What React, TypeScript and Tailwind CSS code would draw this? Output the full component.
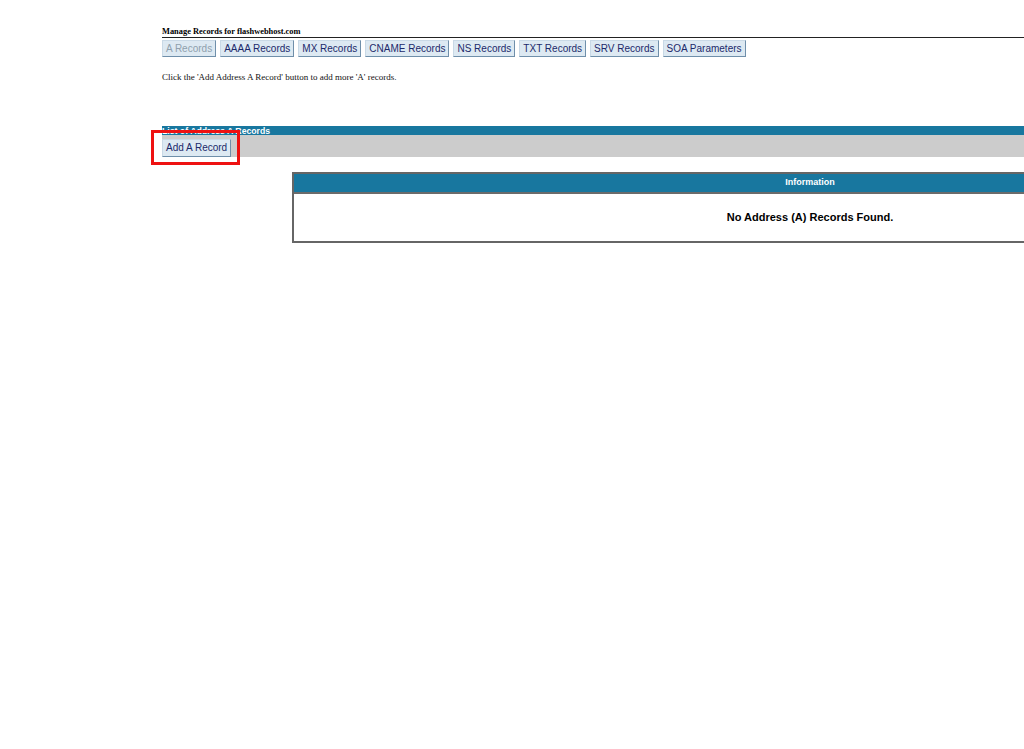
import React from "react";

const tabs = ["A Records", "AAAA Records", "MX Records", "CNAME Records", "NS Records", "TXT Records", "SRV Records", "SOA Parameters"];

export default function App() {
  return (
    <div className="w-full h-[749px] overflow-hidden bg-white relative" style={{ fontFamily: '"Liberation Sans", Arial, sans-serif' }}>
      <div className="pl-[162px] pt-[28px]">
        <div
          className="text-[8.4px] leading-[8px] font-bold text-black border-b border-[#222] pb-[1px]"
          style={{ fontFamily: '"Liberation Serif", "Times New Roman", serif' }}
        >
          Manage Records for flashwebhost.com
        </div>
        <div className="flex gap-[4px] mt-[2px]">
          {tabs.map((t, i) => (
            <div
              key={t}
              className={
                "h-[17px] px-[3px] flex items-center text-[10px] leading-none bg-[#dde9f2] border border-t-[#c9d9e6] border-l-[#c9d9e6] border-r-[#6f8faa] border-b-[#6f8faa] " +
                (i === 0 ? "text-[#8fa0ad]" : "text-[#1c2a6b]")
              }
            >
              {t}
            </div>
          ))}
        </div>
        <div
          className="text-[9px] leading-[10px] text-[#111] mt-[15px]"
          style={{ fontFamily: '"Liberation Serif", "Times New Roman", serif' }}
        >
          Click the 'Add Address A Record' button to add more 'A' records.
        </div>
        <div className="mt-[44px] h-[9px] bg-[#18779f] text-white text-[8.7px] leading-[10px] font-bold whitespace-nowrap overflow-hidden">
          List of Address A Records
        </div>
        <div className="h-[22px] bg-[#cccccc] pt-[4px] flex items-start">
          <div className="flex h-[18px] px-[3px] items-center text-[10px] leading-none text-[#1c2a6b] bg-[#dde9f2] border border-t-[#c9d9e6] border-l-[#c9d9e6] border-r-[#6f8faa] border-b-[#6f8faa]">
            Add A Record
          </div>
        </div>
        <div className="ml-[130px] mt-[15px] w-[1036px] border-2 border-[#666] bg-white">
          <div className="h-[20px] bg-[#18779f] text-white text-[9px] font-bold flex items-center justify-center border-b-2 border-[#6b6b6b]">
            Information
          </div>
          <div className="h-[47px] flex items-center justify-center text-[11px] font-bold text-black">
            No Address (A) Records Found.
          </div>
        </div>
      </div>
      <div className="absolute left-[151px] top-[130px] w-[89px] h-[35px] border-[3px] border-[#ee1111] pointer-events-none" />
    </div>
  );
}
